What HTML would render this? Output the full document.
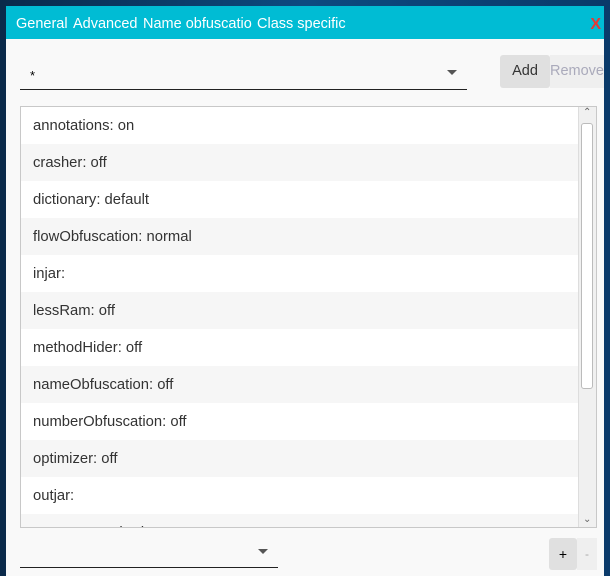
<!DOCTYPE html><html><head><style>
body{margin:0;width:610px;height:570px;overflow:hidden;background:linear-gradient(90deg,#0a2a4a,#0d4a80 50%,#0a3a6a);font-family:"Liberation Sans",sans-serif;position:relative}
.win{position:absolute;left:6px;top:6px;width:598px;height:570px;background:#f9f9f9}
.hd{height:33px;background:#00bcd4;color:#fff;font-size:14.5px;position:relative}
.hd span{position:absolute;top:10px}
.x{position:absolute;right:3px;top:8px;color:#e53935;font-weight:bold;font-size:16px}
.combo{position:absolute;border-bottom:1px solid #222;}
.tri{position:absolute;width:0;height:0;border-left:5px solid transparent;border-right:5px solid transparent;border-top:5px solid #555}
.list{position:absolute;left:14px;top:100px;width:575px;height:420px;border:1px solid #c8c8c8;background:#fff;overflow:hidden}
.row{height:37px;line-height:39px;padding-left:12px;font-size:14.8px;color:#333}
.row:nth-child(even){background:#f6f6f6}
.sb{position:absolute;right:0;top:0;width:17px;height:100%;background:#f0f0f0;border-left:1px solid #ddd}
.th{position:absolute;left:2px;top:16px;width:12px;height:266px;background:#fff;border:1px solid #bbb;border-radius:3px;box-sizing:border-box}
</style></head><body><div class="win">
<div class="hd"><span style="left:10px">General</span><span style="left:67px">Advanced</span><span style="left:137px">Name obfuscatio</span><span style="left:251px">Class specific</span><span class="x">X</span></div>
<div class="combo" style="left:14px;top:50px;width:447px;height:33px"><span style="position:absolute;left:10px;top:12px;font-size:13px">*</span><div class="tri" style="right:10px;top:14px"></div></div>
<div style="position:absolute;left:494px;top:49px;width:50px;height:33px;background:#e0e0e0;border-radius:3px;font-size:14.5px;line-height:33px;text-align:center;color:#333">Add</div>
<div style="position:absolute;left:544px;top:49px;width:54px;height:33px;background:#efefef;font-size:14.5px;line-height:33px;color:#aab;text-align:center">Remove</div>
<div class="list">
<div class="row">annotations: on</div><div class="row">crasher: off</div><div class="row">dictionary: default</div><div class="row">flowObfuscation: normal</div><div class="row">injar:</div><div class="row">lessRam: off</div><div class="row">methodHider: off</div><div class="row">nameObfuscation: off</div><div class="row">numberObfuscation: off</div><div class="row">optimizer: off</div><div class="row">outjar:</div><div class="row">preventInMethod</div>
<div class="sb"><div class="th"></div><span style="position:absolute;top:0;left:4px;font-size:10px;color:#666">⌃</span><span style="position:absolute;bottom:2px;left:4px;font-size:10px;color:#666">⌄</span></div>
</div>
<div class="combo" style="left:14px;top:530px;width:258px;height:31px"><div class="tri" style="right:10px;top:13px"></div></div>
<div style="position:absolute;left:543px;top:532px;width:28px;height:32px;background:#e0e0e0;border-radius:3px;text-align:center;line-height:32px;font-size:14px">+</div>
<div style="position:absolute;left:571px;top:532px;width:20px;height:32px;background:#efefef;text-align:center;line-height:32px;font-size:12px;color:#aaa">-</div>
</div></body></html>
